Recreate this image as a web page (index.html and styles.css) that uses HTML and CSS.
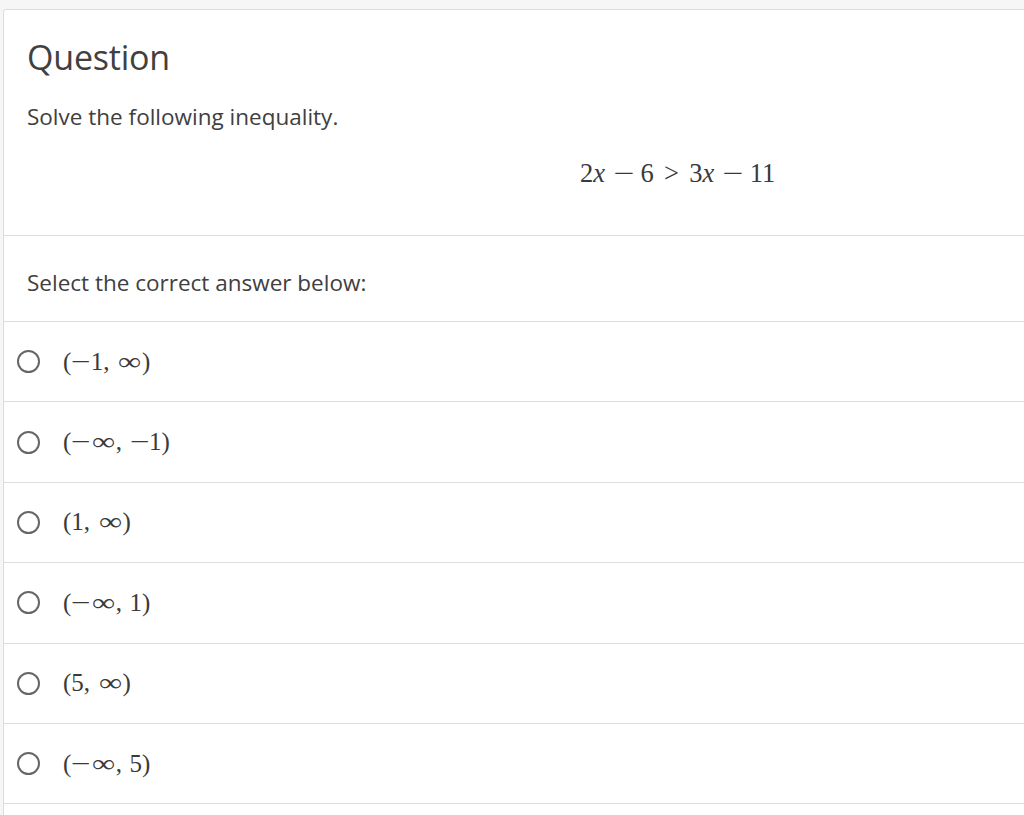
FILE: index.html
```html
<!DOCTYPE html>
<html lang="en">
<head>
<meta charset="utf-8">
<title>Question</title>
<link rel="stylesheet" href="styles.css">
</head>
<body>
<div class="card">
  <section class="question">
    <h1 class="title">Question</h1>
    <p class="prompt">Solve the following inequality.</p>
    <div class="math display"><span>2</span><i class="mi">x</i><span class="bin"><span class="minus">−</span></span><span>6</span><span class="rel">&gt;</span><span>3</span><i class="mi">x</i><span class="bin"><span class="minus">−</span></span><span>11</span></div>
  </section>
  <div class="instr">Select the correct answer below:</div>
  <ul class="options">
    <li class="option"><span class="radio"></span><span class="math">(<span class="minus">−</span>1,<span class="sp"></span><span class="inf">∞</span>)</span></li>
    <li class="option"><span class="radio"></span><span class="math">(<span class="minus">−</span><span class="inf">∞</span>,<span class="sp"></span><span class="minus">−</span>1)</span></li>
    <li class="option"><span class="radio"></span><span class="math">(1,<span class="sp"></span><span class="inf">∞</span>)</span></li>
    <li class="option"><span class="radio"></span><span class="math">(<span class="minus">−</span><span class="inf">∞</span>,<span class="sp"></span>1)</span></li>
    <li class="option"><span class="radio"></span><span class="math">(5,<span class="sp"></span><span class="inf">∞</span>)</span></li>
    <li class="option"><span class="radio"></span><span class="math">(<span class="minus">−</span><span class="inf">∞</span>,<span class="sp"></span>5)</span></li>
  </ul>
</div>
</body>
</html>
```
FILE: styles.css
```css
html, body {
  margin: 0;
  padding: 0;
  background: #f6f6f6;
  overflow: hidden;
}
body {
  padding: 9px 0 0 3px;
  font-family: "Open Sans", "Liberation Sans", sans-serif;
  color: #404040;
}
.card {
  width: 1400px;
  min-height: 820px;
  background: #fff;
  border: 1px solid #dcdcdc;
  border-radius: 3px;
}
.question {
  padding: 24px 0 0 23px;
  height: 201px;
  border-bottom: 1px solid #dedede;
}
.title {
  margin: 0;
  font-size: 34px;
  font-weight: 400;
  line-height: 46px;
  color: #404040;
  letter-spacing: -0.2px;
}
.prompt {
  margin: 22px 0 0 0;
  font-size: 22.5px;
  line-height: 30px;
}
.math {
  font-family: "Liberation Serif", "DejaVu Serif", serif;
  color: #3a3a3a;
  white-space: nowrap;
}
.display {
  margin-top: 25px;
  padding-left: 553px;
  font-size: 26.5px;
  line-height: 32px;
  display: flex;
  align-items: baseline;
}
.mi {
  font-style: italic;
  padding-right: 0.12em;
}
.bin {
  padding: 0 0.222em;
}
.rel {
  display: inline-block;
  padding: 0 0.278em;
  width: 0.778em;
  text-align: center;
  box-sizing: content-box;
}
.minus {
  display: inline-block;
  width: 0.778em;
  text-align: center;
  transform: scaleX(1.4);
}
.inf {
  display: inline-block;
  width: 1em;
  text-align: center;
  transform: scaleX(1.3);
}
.sp {
  display: inline-block;
  width: 0.3em;
}
.instr {
  height: 53px;
  padding: 32px 0 0 23px;
  font-size: 22.5px;
  line-height: 30px;
  border-bottom: 1px solid #dedede;
}
.options {
  list-style: none;
  margin: 0;
  padding: 0;
}
.option {
  height: 79.4px;
  border-bottom: 1px solid #dedede;
  display: flex;
  align-items: center;
  padding-left: 13px;
  gap: 23px;
}
.option .math {
  font-size: 25px;
}
.radio {
  width: 19px;
  height: 19px;
  border: 2.5px solid #666;
  border-radius: 50%;
  box-sizing: content-box;
  flex: none;
}
```
